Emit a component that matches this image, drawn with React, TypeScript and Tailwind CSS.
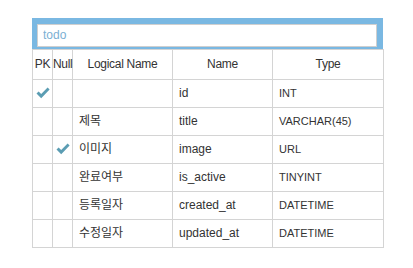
import { Fragment } from 'react';

type Column = {
  pk: boolean;
  nullable: boolean;
  logical: string;
  name: string;
  type: string;
};

const columns: Column[] = [
  { pk: true, nullable: false, logical: '', name: 'id', type: 'INT' },
  { pk: false, nullable: false, logical: '제목', name: 'title', type: 'VARCHAR(45)' },
  { pk: false, nullable: true, logical: '이미지', name: 'image', type: 'URL' },
  { pk: false, nullable: false, logical: '완료여부', name: 'is_active', type: 'TINYINT' },
  { pk: false, nullable: false, logical: '등록일자', name: 'created_at', type: 'DATETIME' },
  { pk: false, nullable: false, logical: '수정일자', name: 'updated_at', type: 'DATETIME' },
];

function Check() {
  return (
    <svg viewBox="0 0 14 12" className="w-[14px] h-[12px] mx-auto" fill="#5b9db3">
      <path d="M0.5 6.6 L2.6 4.6 L5.2 7.1 L11.6 0.6 L13.6 2.6 L5.2 11.2 Z" />
    </svg>
  );
}

export default function App() {
  return (
    <div className="pl-[32px] pt-[18px] font-['Liberation_Sans','Noto_Sans_CJK_KR',sans-serif] text-[#333]">
      <div className="w-[351px]">
        <div className="bg-[#7ab8e2] pt-[4px] pb-[2px] pl-[5px] pr-[6px]">
          <input
            className="w-full h-[23px] bg-white border border-[#cfcfcf] px-[5px] text-[12px] outline-none placeholder:text-[#7bb0d3]"
            placeholder="todo"
          />
        </div>
        <table className="table-fixed border-collapse w-[351px] text-[12px]">
          <colgroup>
            <col className="w-[20px]" />
            <col className="w-[20px]" />
            <col className="w-[100px]" />
            <col className="w-[100px]" />
            <col className="w-[111px]" />
          </colgroup>
          <thead>
            <tr className="h-[30px]">
              {['PK', 'Null', 'Logical Name', 'Name', 'Type'].map((h) => (
                <th key={h} className="border border-[#d4d4d4] font-normal text-center p-0 whitespace-nowrap tracking-[-0.3px]">
                  {h}
                </th>
              ))}
            </tr>
          </thead>
          <tbody>
            {columns.map((c) => (
              <Fragment key={c.name}>
                <tr className="h-[28px]">
                  <td className="border border-[#d4d4d4] p-0">{c.pk && <Check />}</td>
                  <td className="border border-[#d4d4d4] p-0">{c.nullable && <Check />}</td>
                  <td className="border border-[#d4d4d4] px-[6px]">{c.logical}</td>
                  <td className="border border-[#d4d4d4] px-[6px]">{c.name}</td>
                  <td className="border border-[#d4d4d4] px-[6px] text-[11px]">{c.type}</td>
                </tr>
              </Fragment>
            ))}
          </tbody>
        </table>
      </div>
    </div>
  );
}
